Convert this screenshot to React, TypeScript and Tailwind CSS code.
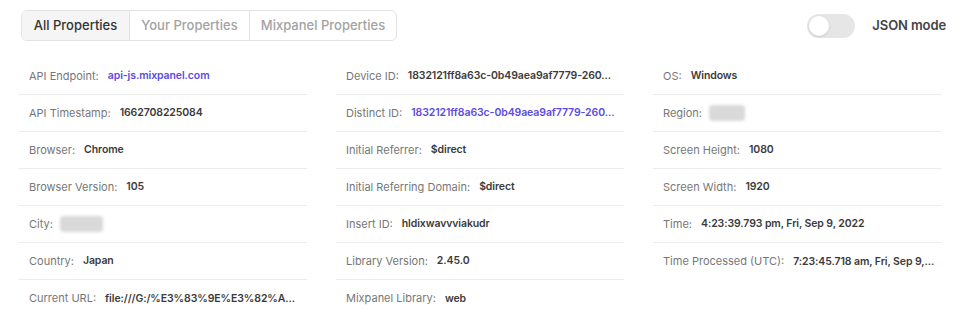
const font = { fontFamily: 'Inter, "Noto Sans", sans-serif' };

type Prop = { label: string; value?: string; link?: boolean; blur?: string };

const columns: Prop[][] = [
  [
    { label: 'API Endpoint:', value: 'api-js.mixpanel.com', link: true },
    { label: 'API Timestamp:', value: '1662708225084' },
    { label: 'Browser:', value: 'Chrome' },
    { label: 'Browser Version:', value: '105' },
    { label: 'City:', blur: 'w-[43px]' },
    { label: 'Country:', value: 'Japan' },
    { label: 'Current URL:', value: 'file:///G:/%E3%83%9E%E3%82%A...' },
  ],
  [
    { label: 'Device ID:', value: '1832121ff8a63c-0b49aea9af7779-260...' },
    { label: 'Distinct ID:', value: '1832121ff8a63c-0b49aea9af7779-260...', link: true },
    { label: 'Initial Referrer:', value: '$direct' },
    { label: 'Initial Referring Domain:', value: '$direct' },
    { label: 'Insert ID:', value: 'hldixwavvviakudr' },
    { label: 'Library Version:', value: '2.45.0' },
    { label: 'Mixpanel Library:', value: 'web' },
  ],
  [
    { label: 'OS:', value: 'Windows' },
    { label: 'Region:', blur: 'w-[36px]' },
    { label: 'Screen Height:', value: '1080' },
    { label: 'Screen Width:', value: '1920' },
    { label: 'Time:', value: '4:23:39.793 pm, Fri, Sep 9, 2022' },
    { label: 'Time Processed (UTC):', value: '7:23:45.718 am, Fri, Sep 9,...' },
  ],
];

function Row({ p, last }: { p: Prop; last: boolean }) {
  return (
    <div
      className={`h-[37px] flex items-center pl-[10px] text-[11px] whitespace-nowrap ${
        last ? '' : 'border-b border-[#ececec]'
      }`}
    >
      <span className="text-[#777]">{p.label}</span>
      {p.blur ? (
        <span className={`ml-[7px] h-[16px] ${p.blur} bg-[#d9d9d9] rounded-sm blur-[1.5px]`} />
      ) : (
        <span
          className={`ml-[9px] text-[10.5px] tracking-[-0.1px] font-semibold ${
            p.link ? 'text-[#5b4ce0]' : 'text-[#3b3b3b]'
          }`}
        >
          {p.value}
        </span>
      )}
    </div>
  );
}

export default function App() {
  return (
    <div className="w-[960px] h-[317px] bg-white overflow-hidden" style={font}>
      <div className="flex items-center justify-between pl-[21px] pr-[14px] pt-[10px]">
        <div className="flex h-[31px] border border-[#e3e3e3] rounded-md overflow-hidden text-[13px] font-medium">
          <div className="w-[108px] flex items-center justify-center bg-[#f5f5f5] text-[#333] border-r border-[#e3e3e3]">
            All Properties
          </div>
          <div className="w-[120px] flex items-center justify-center text-[#a3a3a3] border-r border-[#e3e3e3]">
            Your Properties
          </div>
          <div className="w-[146px] flex items-center justify-center text-[#a3a3a3]">
            Mixpanel Properties
          </div>
        </div>
        <div className="flex items-center gap-[17px]">
          <div className="w-[48px] h-[24px] rounded-full bg-[#e6e6e6] flex items-center px-[2px]">
            <div className="w-[20px] h-[20px] rounded-full bg-white shadow-sm" />
          </div>
          <span className="text-[13px] font-semibold tracking-[-0.1px] text-[#444]">JSON mode</span>
        </div>
      </div>
      <div className="grid grid-cols-3 gap-x-[29px] px-[19px] mt-[17px]">
        {columns.map((col, i) => (
          <div key={i} className="flex flex-col">
            {col.map((p, j) => (
              <Row key={p.label} p={p} last={j === col.length - 1} />
            ))}
          </div>
        ))}
      </div>
    </div>
  );
}
